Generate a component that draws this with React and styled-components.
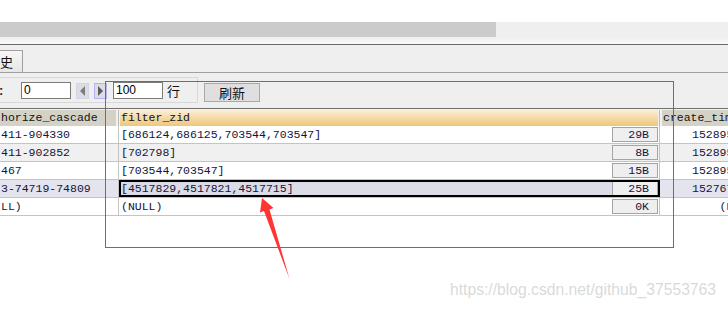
import React from "react";
import styled, { createGlobalStyle } from "styled-components";

const rows = [
  { key: "411-904330", ids: "[686124,686125,703544,703547]", size: "29B", time: "1528953360" },
  { key: "411-902852", ids: "[702798]", size: "8B", time: "1528953361" },
  { key: "467", ids: "[703544,703547]", size: "15B", time: "1528953362" },
  { key: "3-74719-74809", ids: "[4517829,4517821,4517715]", size: "25B", time: "1527676301", selected: true },
  { key: "LL)", ids: "(NULL)", size: "0K", time: "(NULL)" },
];

const App = () => {
  return (
    <>
      <GlobalStyles />
      <Page>
        <TopSpace />
        <ScrollTrack>
          <ScrollThumb />
        </ScrollTrack>
        <Strip />
        <TabBar>
          <Tab>史</Tab>
        </TabBar>

        <Toolbar>
          <Group>
            <Colon>:</Colon>
            <NumInput $w={50} $ml={17}>0</NumInput>
            <ArrowBtn $ml={5} $active={false}>
              <Tri $dir="left" />
            </ArrowBtn>
            <ArrowBtn $ml={5} $active>
              <Tri $dir="right" />
            </ArrowBtn>
            <NumInput $w={50} $ml={6}>100</NumInput>
            <Label>行</Label>
          </Group>
          <Button>刷新</Button>
        </Toolbar>

        <Table>
          <HeadRow>
            <HeadCell>
              <HeadFill $ml={0} $mr={2}>horize_cascade</HeadFill>
            </HeadCell>
            <HeadCell>
              <HeadFill $ml={1} $mr={1} $accent>filter_zid</HeadFill>
            </HeadCell>
            <HeadCell>
              <HeadFill $ml={2} $mr={0}>create_time</HeadFill>
            </HeadCell>
          </HeadRow>

          {rows.map((r, i) => (
            <Row key={i} $alt={i % 2 === 1} $selected={r.selected}>
              <Cell>{r.key}</Cell>
              <ZidCell $selected={r.selected}>
                <span>{r.ids}</span>
                <SizeBadge>{r.size}</SizeBadge>
              </ZidCell>
              <TimeCell>{r.time}</TimeCell>
            </Row>
          ))}
        </Table>

        <Highlight />
        <Pointer viewBox="0 0 45 95" width="45" height="95">
          <polygon
            points="12,8 23.5,18 19.5,19.5 39.5,89 14,21 10,22.5"
            fill="#ff3535"
          />
        </Pointer>
        <Watermark>https://blog.csdn.net/github_37553763</Watermark>
      </Page>
    </>
  );
};

const GlobalStyles = createGlobalStyle`
  html, body {
    margin: 0;
    padding: 0;
    background: #ffffff;
  }
  body {
    font-family: "Liberation Sans", Arial, sans-serif;
  }
`;

const Page = styled.div`
  position: relative;
  width: 728px;
  height: 309px;
  overflow: hidden;
  background: #ffffff;
`;

const TopSpace = styled.div`
  height: 22px;
`;

const ScrollTrack = styled.div`
  height: 15px;
  background: #efefef;
  display: flex;
`;

const ScrollThumb = styled.div`
  width: 496px;
  background: #cbcbcb;
`;

const Strip = styled.div`
  height: 7px;
  background: linear-gradient(#efefef, #f8f8f8);
  border-bottom: 1px solid #6a6a6a;
`;

const TabBar = styled.div`
  height: 27px;
  background: #efefef;
  border-bottom: 1px solid #a0a0a0;
  display: flex;
  align-items: flex-end;
`;

const Tab = styled.div`
  width: 23px;
  height: 22px;
  box-sizing: border-box;
  border: 1px solid #a0a0a0;
  border-left: none;
  border-bottom: none;
  background: linear-gradient(#f6f6f6, #e6e6e6);
  font-family: "Noto Sans CJK SC", sans-serif;
  font-size: 13px;
  line-height: 22px;
  color: #111;
`;

const Toolbar = styled.div`
  height: 35px;
  background: #efefef;
  border-bottom: 1px solid #707070;
  display: flex;
  align-items: flex-start;
`;

const Group = styled.div`
  margin-top: 4px;
  width: 198px;
  height: 26px;
  box-sizing: border-box;
  border: 1px solid #d8d8d8;
  border-left: none;
  display: flex;
  align-items: center;
  padding-top: 1px;
`;

const Colon = styled.span`
  width: 4px;
  font-size: 13px;
  color: #222;
  font-weight: bold;
  line-height: 1;
  text-indent: -1px;
`;

const NumInput = styled.div`
  width: ${(p) => p.$w}px;
  height: 17px;
  margin-left: ${(p) => p.$ml}px;
  box-sizing: border-box;
  border: 1px solid #7a7a7a;
  background: #ffffff;
  font-family: "Liberation Sans", Arial, sans-serif;
  font-size: 12px;
  line-height: 15px;
  padding-left: 2px;
  color: #000;
`;

const ArrowBtn = styled.div`
  width: 13px;
  height: 16px;
  margin-left: ${(p) => p.$ml}px;
  box-sizing: border-box;
  border: 1px solid ${(p) => (p.$active ? "#b4b4f0" : "#d4d4e4")};
  background: #dcdce6;
  display: flex;
  align-items: center;
  justify-content: center;
`;

const Tri = styled.span`
  width: 0;
  height: 0;
  border-top: 5px solid transparent;
  border-bottom: 5px solid transparent;
  ${(p) =>
    p.$dir === "left"
      ? "border-right: 5px solid #7c7c7c;"
      : "border-left: 5px solid #5c5c5c;"}
`;

const Label = styled.span`
  margin-left: 4px;
  font-family: "Noto Sans CJK SC", sans-serif;
  font-size: 13px;
  line-height: 1;
  color: #111;
`;

const Button = styled.div`
  margin-left: 6px;
  margin-top: 10px;
  width: 56px;
  height: 19px;
  box-sizing: border-box;
  border: 1px solid #a8a8a8;
  background: #dfdfdf;
  font-family: "Noto Sans CJK SC", sans-serif;
  font-size: 13px;
  line-height: 17px;
  text-align: center;
  color: #111;
`;

const Table = styled.div`
  width: 765px;
  font-family: "Liberation Mono", "Courier New", monospace;
  font-size: 11.5px;
  color: #14143a;
`;

const grid = `
  display: grid;
  grid-template-columns: 119px 541px 105px;
`;

const HeadRow = styled.div`
  ${grid}
  height: 17px;
  background: #f2f2f2;
  padding-top: 1px;
  box-sizing: border-box;
`;

const HeadCell = styled.div`
  border-right: 1px solid #b8b8b8;
  display: flex;
  overflow: hidden;
`;

const HeadFill = styled.div`
  flex: 1;
  margin-left: ${(p) => p.$ml}px;
  margin-right: ${(p) => p.$mr}px;
  background: ${(p) =>
    p.$accent
      ? "linear-gradient(#fbeed8, #f6dcaa 45%, #efc67a)"
      : "#d4d1c6"};
  line-height: 16px;
  padding-left: 1px;
  white-space: nowrap;
  color: #111;
`;

const Row = styled.div`
  ${grid}
  height: 18px;
  box-sizing: border-box;
  border-bottom: 1px solid #c4c4c4;
  background: ${(p) =>
    p.$selected ? "#e4e4ee" : p.$alt ? "#f0f0f0" : "#ffffff"};
`;

const Cell = styled.div`
  border-right: 1px solid #c4c4c4;
  line-height: 17px;
  padding-left: 1px;
  white-space: nowrap;
  overflow: hidden;
`;

const ZidCell = styled(Cell)`
  display: flex;
  align-items: center;
  justify-content: space-between;
  padding-left: 2px;
  padding-right: 1px;
  background: ${(p) => (p.$selected ? "#dcdce8" : "transparent")};
  outline: ${(p) => (p.$selected ? "2px solid #000" : "none")};
  outline-offset: -2px;
`;

const SizeBadge = styled.div`
  width: 46px;
  height: 15px;
  box-sizing: border-box;
  border: 1px solid #a4a4a4;
  background: #efefef;
  text-align: right;
  padding-right: 8px;
  line-height: 13px;
`;

const TimeCell = styled.div`
  text-align: right;
  padding-right: 4px;
  line-height: 17px;
  white-space: nowrap;
`;

const Highlight = styled.div`
  position: absolute;
  left: 105px;
  top: 81px;
  width: 569px;
  height: 167px;
  box-sizing: border-box;
  border: 1px solid #e53b3b;
  pointer-events: none;
`;

const Pointer = styled.svg`
  position: absolute;
  left: 250px;
  top: 190px;
`;

const Watermark = styled.div`
  position: absolute;
  left: 450px;
  top: 281px;
  font-family: "Liberation Sans", Arial, sans-serif;
  font-size: 15.7px;
  line-height: 18px;
  color: rgba(205, 205, 205, 0.75);
  white-space: nowrap;
`;

export default App;
